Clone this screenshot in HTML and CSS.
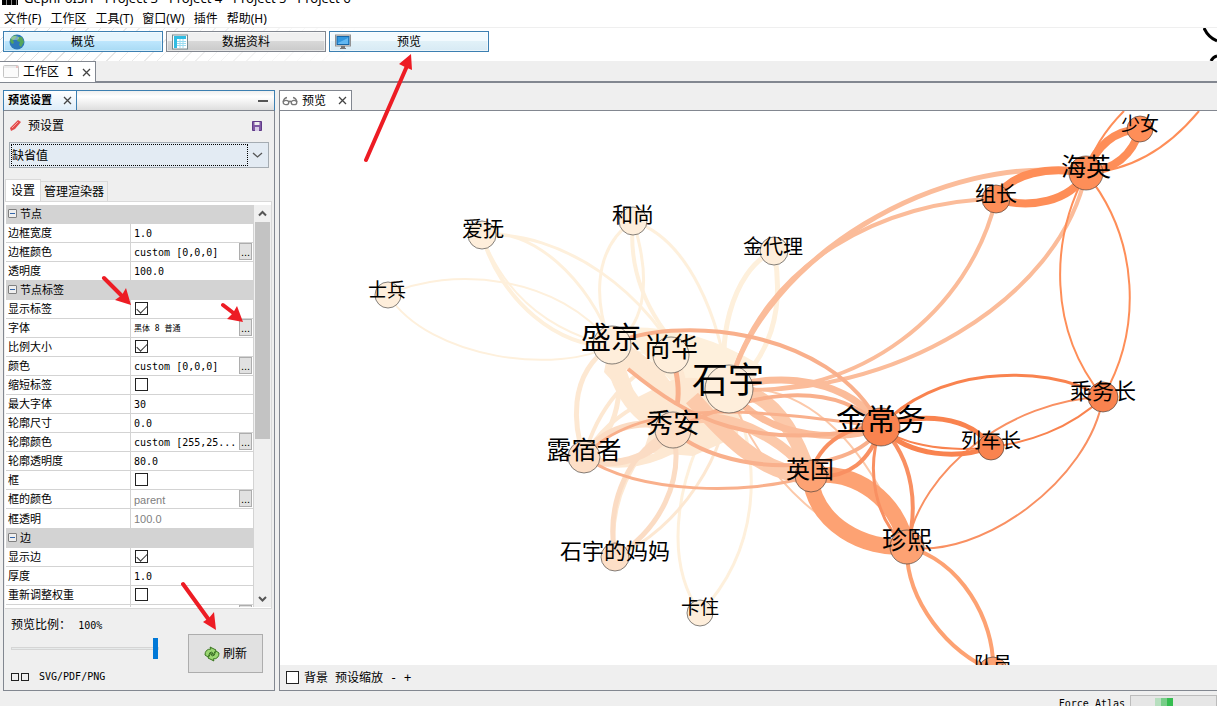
FILE: index.html
```html
<!DOCTYPE html>
<html lang="zh-CN">
<head>
<meta charset="utf-8">
<title>Gephi</title>
<link rel="stylesheet" href="styles.css">
</head>
<body>
<header class="titlebar"><span class="app-icon"></span><span class="title">GephPoISH - Project 3 - Project 4 - Project 5 - Project 6</span></header>
<nav class="menu">
  <button>文件(F)</button><button>工作区</button><button>工具(T)</button><button>窗口(W)</button><button>插件</button><button>帮助(H)</button>
</nav>
<div class="perspectives">
  <button class="persp blue">
    <svg width="16" height="16" viewBox="0 0 16 16"><circle cx="8" cy="8" r="7.5" fill="#2d78b8"/><path d="M2 4Q5 0 8 2L6 5 4 6 5 9 3 10 1 7ZM9 3L13 3 15 8 12 13 10 11 11 8 8 7Z" fill="#55a65c"/><ellipse cx="6" cy="4" rx="4" ry="2" fill="#fff" opacity=".35"/></svg>
    <span>概览</span></button>
  <button class="persp gray">
    <svg width="16" height="16" viewBox="0 0 16 16"><rect x=".5" y="1" width="15" height="14" fill="#fff" stroke="#778a8e"/><path d="M2 2h12v3H2zM2 5h3v9H2z" fill="#31bce2"/><path d="M5 7.500h9M5 9.500h9M5 11.500h9M8 5v9M11 5v9" stroke="#9bdcf0"/></svg>
    <span>数据资料</span></button>
  <button class="persp pale">
    <svg width="16" height="16" viewBox="0 0 16 16"><rect x=".5" y="1" width="15" height="11" fill="#ddd" stroke="#929292"/><rect x="2" y="2.500" width="12" height="8" fill="#3197df" stroke="#1766a6"/><path d="M3 9L13 4V10H3Z" fill="#62b8f2"/><path d="M6 12h4v2h1v1H5v-1h1z" fill="#777"/></svg>
    <span>预览</span></button>
  <svg class="swirl" width="14" height="33" viewBox="0 0 14 33"><path d="M1 0Q5 9 14 13M8 33Q10 29 14 28" fill="none" stroke="#000" stroke-width="3"/></svg>
</div>
<div class="workspaces">
  <div class="workspace-tab">
    <svg width="16" height="14" viewBox="0 0 16 14"><rect x=".5" y=".5" width="15" height="12" rx="1" fill="#fbfbfb" stroke="#c5c5c5"/><path d="M1 2h12" stroke="#ddd"/><path d="M13 2h2" stroke="#d88"/></svg>
    <span>工作区 1</span>
    <button class="close" aria-label="关闭工作区"><svg width="9" height="9" viewBox="0 0 9 9"><path d="M1 1L8 8M8 1L1 8"/></svg></button>
  </div>
</div>
<main class="main">
  <section class="settings">
    <div class="panel-head">
      <div class="panel-tab active"><b>预览设置</b><button class="close" aria-label="关闭"><svg width="9" height="9" viewBox="0 0 9 9"><path d="M1 1L8 8M8 1L1 8"/></svg></button></div>
      <button class="minimize" aria-label="最小化"></button>
    </div>
    <div class="preset-row">
      <svg width="12" height="12" viewBox="0 0 12 12"><path d="M0 8L8 0 11 2 5 9 1 11Z" fill="#e24b4b"/><path d="M2 8L8 2" stroke="#f7a3a0"/></svg>
      <label for="preset">预设置</label>
      <button class="save" aria-label="保存"><svg width="10" height="10" viewBox="0 0 10 10"><path d="M.5.5h9v9h-9z" fill="#8059a4" stroke="#5f3b88"/><path d="M2.500 1h5v3h-5z" fill="#eee"/><path d="M3 6h4v4H3z" fill="#d8cce8"/></svg></button>
    </div>
    <div class="combo">
      <select id="preset"><option>缺省值</option></select>
      <svg width="19" height="22" viewBox="0 0 19 22"><path d="M5 9L9.500 13 14 9" fill="none" stroke="#555" stroke-width="1.300"/></svg>
    </div>
    <div class="tabs"><button class="on">设置</button><button>管理渲染器</button></div>
    <div class="props">
      <div class="props-view">
      <table>
        <tr class="group"><th colspan="2"><i></i>节点</th></tr>
        <tr><td>边框宽度</td><td>1.0</td></tr>
        <tr><td>边框颜色</td><td><span class="cell"><span>custom [0,0,0]</span><button>...</button></span></td></tr>
        <tr><td>透明度</td><td>100.0</td></tr>
        <tr class="group"><th colspan="2"><i></i>节点标签</th></tr>
        <tr><td><label for="c1">显示标签</label></td><td><input id="c1" type="checkbox" checked></td></tr>
        <tr><td>字体</td><td><span class="cell"><small>黑体 8 普通</small><button>...</button></span></td></tr>
        <tr><td><label for="c2">比例大小</label></td><td><input id="c2" type="checkbox" checked></td></tr>
        <tr><td>颜色</td><td><span class="cell"><span>custom [0,0,0]</span><button>...</button></span></td></tr>
        <tr><td><label for="c3">缩短标签</label></td><td><input id="c3" type="checkbox"></td></tr>
        <tr><td>最大字体</td><td>30</td></tr>
        <tr><td>轮廓尺寸</td><td>0.0</td></tr>
        <tr><td>轮廓颜色</td><td><span class="cell"><span>custom [255,25...</span><button>...</button></span></td></tr>
        <tr><td>轮廓透明度</td><td>80.0</td></tr>
        <tr><td><label for="c4">框</label></td><td><input id="c4" type="checkbox"></td></tr>
        <tr><td>框的颜色</td><td><span class="cell"><span class="off">parent</span><button>...</button></span></td></tr>
        <tr><td>框透明</td><td><span class="off">100.0</span></td></tr>
        <tr class="group"><th colspan="2"><i></i>边</th></tr>
        <tr><td><label for="c5">显示边</label></td><td><input id="c5" type="checkbox" checked></td></tr>
        <tr><td>厚度</td><td>1.0</td></tr>
        <tr><td><label for="c6">重新调整权重</label></td><td><input id="c6" type="checkbox"></td></tr>
        <tr><td></td><td><span class="cell"><span></span><button aria-label="选择"></button></span></td></tr>
      </table>
      </div>
      <div class="scroll">
        <svg width="17" height="17" viewBox="0 0 17 17"><path d="M5 10.500L8.500 7 12 10.500"/></svg>
        <div class="thumb"></div>
        <svg class="down" width="17" height="17" viewBox="0 0 17 17"><path d="M5 7L8.500 10.500 12 7"/></svg>
      </div>
    </div>
    <div class="footer">
      <div class="ratio">
        <label for="ratio">预览比例： <span>100%</span></label>
        <input id="ratio" type="range" min="0" max="100" value="100">
        <div class="export"><i></i><i></i><span>SVG/PDF/PNG</span></div>
      </div>
      <button class="refresh"><svg width="16" height="16" viewBox="0 0 16 16"><g fill="#9bd672" stroke="#39761e" stroke-linejoin="round"><path d="M1 9Q1 3 7 3L6 1 12 4 9 9 8 6Q5 6 5 9L4 11Z"/><path d="M15 7Q15 13 9 13L10 15 4 12 7 7 8 10Q11 10 11 7L12 5Z"/></g></svg><span>刷新</span></button>
    </div>
  </section>
  <section class="preview">
    <div class="panel-head">
      <div class="panel-tab"><svg width="16" height="10" viewBox="0 0 16 10"><g fill="none" stroke="#777" stroke-width="1.300"><ellipse cx="4" cy="6.500" rx="2.800" ry="2.200"/><ellipse cx="12" cy="6.500" rx="2.800" ry="2.200"/><path d="M6.500 6Q8 4.500 9.500 6M1 6Q2 2 5 1.500M15 6Q14 2 11 1.500"/></g></svg><span>预览</span><button class="close" aria-label="关闭预览"><svg width="9" height="9" viewBox="0 0 9 9"><path d="M1 1L8 8M8 1L1 8"/></svg></button></div>
    </div>
    <div class="canvas">
      <svg class="graph" viewBox="280 111 937 554" preserveAspectRatio="xMinYMin slice">
        <g class="edges">
          <path fill="#fef0dc" d="M612 328Q690 322 760 365L740 420 690 400 640 350Z"/>
          <g stroke="#fef0dc">
            <path stroke-width="2" d="M388 295C450 265 560 275 612 345M388 295C430 360 560 375 612 345"/>
            <path stroke-width="3" d="M482 235C530 225 590 280 612 345M482 235C560 230 650 290 690 380"/>
            <path stroke-width="4" d="M482 235C500 300 560 350 612 345"/>
            <path stroke-width="2" d="M482 235C510 310 570 345 660 355"/>
            <path stroke-width="3" d="M633 221C590 250 595 310 612 345M633 221C655 290 640 330 612 345"/>
            <path stroke-width="4" d="M633 221C625 300 680 360 729 389"/>
            <path stroke-width="3" d="M633 221C690 240 720 320 729 389"/>
            <path stroke-width="5" d="M774 251C730 270 715 350 729 389M774 251C785 310 770 360 729 389"/>
            <path stroke-width="3" d="M700 613C663 560 673 470 729 389M700 613C760 550 764 460 729 389"/>
          </g>
          <path fill="#fde8d2" d="M612 330Q640 350 660 385 700 365 740 400L738 436 693 456 643 452 652 425 604 372Z"/>
          <path fill="#fff" d="M626 369L652 390 636 398Z"/>
          <g stroke="#fde8d2">
            <path stroke-width="16" d="M612 345C615 390 640 420 673 430M612 345C660 370 680 400 673 430"/>
            <path stroke-width="10" d="M671 355C685 380 688 410 673 430M671 355C650 380 655 410 673 430"/>
            <path stroke-width="5" d="M612 345C565 375 575 430 584 457M612 345C630 400 610 440 584 457"/>
            <path stroke-width="8" d="M584 457C640 480 710 440 729 389"/>
            <path stroke-width="4" d="M584 457C610 410 670 380 729 389M584 457C600 400 635 370 671 355"/>
            <path stroke-width="3" d="M615 557C680 530 730 450 729 389M615 557C605 480 660 415 729 389"/>
          </g>
          <g stroke="#fbdcc4">
            <path stroke-width="5" d="M615 557C605 500 630 450 673 430M615 557C660 530 685 480 673 430"/>
            <path stroke-width="7" d="M584 457C610 470 650 460 673 430M584 457C600 430 640 415 673 430"/>
          </g>
          <g stroke="#fcc9aa">
            <path stroke-width="14" d="M729 389C770 390 795 430 810 476"/>
            <path stroke-width="16" d="M692 398C720 430 760 475 810 476"/>
            <path stroke-width="10" d="M673 430C700 400 780 430 810 476"/>
            <path stroke-width="2" d="M729 389C760 480 840 550 907 547M729 389C810 380 870 450 907 547"/>
          </g>
          <g stroke="#fbbc9a">
            <path stroke-width="5" d="M729 389C760 260 940 150 1086 173"/>
            <path stroke-width="4" d="M729 389C760 260 890 200 996 199M729 389C860 400 970 310 996 199M729 389C890 400 1060 300 1086 173"/>
            <path stroke-width="7" d="M729 389C780 370 850 380 881 427M729 389C770 445 850 440 881 427"/>
          </g>
          <g stroke="#f9b08c">
            <path stroke-width="4" d="M612 345C670 315 830 325 881 427M628 369C690 420 750 452 881 427M673 430C740 395 830 375 881 427M673 430C720 475 850 480 881 427"/>
            <path stroke-width="3" d="M584 457C640 395 760 410 881 427M584 457C640 495 750 495 810 476"/>
            <path stroke-width="5" d="M673 357C677 375 680 390 677 405"/>
          </g>
          <g stroke="#fda273">
            <path stroke-width="16" d="M810 476C855 468 898 500 907 547M810 476C815 525 865 550 907 547"/>
            <path stroke-width="4" d="M907 547C905 600 950 655 993 670M907 547C960 560 995 620 993 670"/>
          </g>
          <g stroke="#f99062">
            <path stroke-width="2" d="M907 547C920 470 1010 400 1103 397M907 547C980 560 1090 480 1103 397"/>
            <path stroke-width="3" d="M881 427C865 470 875 520 907 547"/>
            <path stroke-width="4" d="M881 427C915 460 918 510 907 547M810 476C820 440 850 425 881 427M810 476C850 480 870 460 881 427"/>
          </g>
          <g stroke="#f9834f">
            <path stroke-width="3" d="M881 427C930 370 1040 360 1103 397"/>
            <path stroke-width="2" d="M881 427C920 460 1040 460 1103 397"/>
            <path stroke-width="5" d="M881 427C920 412 970 415 991 447M881 427C910 458 960 459 991 447"/>
          </g>
          <g stroke="#fe8e58">
            <path stroke-width="2" d="M1086 173C1050 240 1048 330 1103 397M1086 173C1140 240 1142 330 1103 397M1086 173Q1095 140 1124 111M1086 173Q1150 170 1199 111"/>
            <path stroke-width="8" d="M1086 173Q1102 131 1140 129M1140 129Q1129 168 1086 173M996 199C1010 172 1050 166 1086 173M996 199C1030 209 1070 202 1086 173"/>
          </g>
        </g>
        <g class="nodes">
          <g fill="#feeedb"><circle cx="612" cy="345" r="19"/><circle cx="671" cy="355" r="18"/><circle cx="729" cy="389" r="24"/><circle cx="482" cy="235" r="14"/><circle cx="633" cy="221" r="14"/><circle cx="774" cy="251" r="14"/><circle cx="388" cy="295" r="13"/><circle cx="700" cy="613" r="13"/></g>
          <g fill="#fddfc7"><circle cx="673" cy="430" r="18"/><circle cx="584" cy="457" r="16"/><circle cx="615" cy="557" r="14"/></g>
          <g fill="#fda273"><circle cx="811" cy="476" r="16"/><circle cx="907" cy="547" r="17"/><circle cx="993" cy="672" r="15"/></g>
          <g fill="#f9834f"><circle cx="881" cy="427" r="19"/><circle cx="991" cy="447" r="13"/><circle cx="1103" cy="397" r="15"/></g>
          <g fill="#fe8e58"><circle cx="1086" cy="173" r="17"/><circle cx="996" cy="199" r="14"/><circle cx="1140" cy="129" r="13"/></g>
        </g>
        <g class="labels">
          <text x="611" y="348" font-size="30">盛京</text>
          <text x="671" y="357" font-size="27">尚华</text>
          <text x="728" y="393" font-size="36">石宇</text>
          <text x="673" y="433" font-size="27">秀安</text>
          <text x="584" y="459" font-size="25">露宿者</text>
          <text x="881" y="430" font-size="30">金常务</text>
          <text x="810" y="478" font-size="24">英国</text>
          <text x="907" y="549" font-size="25">珍熙</text>
          <text x="1086" y="176" font-size="25">海英</text>
          <text x="996" y="201" font-size="21">组长</text>
          <text x="1140" y="131" font-size="19">少女</text>
          <text x="991" y="448" font-size="20">列车长</text>
          <text x="1103" y="399" font-size="22">乘务长</text>
          <text x="483" y="236" font-size="21">爱抚</text>
          <text x="633" y="222" font-size="21">和尚</text>
          <text x="773" y="254" font-size="20">金代理</text>
          <text x="387" y="297" font-size="19">士兵</text>
          <text x="615" y="559" font-size="22">石宇的妈妈</text>
          <text x="700" y="614" font-size="19">卡住</text>
          <text x="993" y="671" font-size="19">队员</text>
        </g>
      </svg>
    </div>
    <div class="preview-bar"><input id="bg" type="checkbox"><label for="bg">背景</label><span>预设缩放</span><button>-</button><button>+</button></div>
  </section>
</main>
<footer class="status"><span>Force Atlas</span><div class="progress"><i></i><i></i><i></i></div></footer>
<svg class="arrows" width="1217" height="706" viewBox="0 0 1217 706">
  <g stroke="#ed1c24" stroke-width="4" stroke-linecap="round"><path d="M366 160L407 66M104 278L122 296M223 305L236 315M183 584L209 620"/></g>
  <g fill="#ed1c24"><path d="M411 54L412 70 405 67 399 64ZM131 305L115 300 122 295 126 288ZM243 322L227 319 233 313 237 306ZM216 630L203 622 209 618 214 612Z"/></g>
</svg>
</body>
</html>
```
FILE: styles.css
```css
* { box-sizing: border-box; }
body { margin: 0; height: 100vh; display: flex; flex-direction: column; overflow: hidden; background: #efefef; color: #000; font: 12px/18px "DejaVu Sans Mono", "Noto Sans CJK SC", monospace; }
button, input, select { font: inherit; color: inherit; margin: 0; padding: 0; border: 0; background: none; }
.titlebar { flex: none; height: 8px; display: flex; align-items: flex-end; gap: 6px; padding-left: 2px; overflow: hidden; background: #fff; font: 13px/18px "Noto Sans", sans-serif; }
.app-icon { width: 16px; height: 5px; margin-bottom: 3px; background: repeating-linear-gradient(90deg, #000 0 4px, #888 4px 5px); }
.title { height: 18px; margin-bottom: 1px; }
.menu { flex: none; height: 20px; display: flex; gap: 9px; padding: 1px 0 0 4px; background: #fff; border-bottom: 1px solid #efefef; font: 12px/20px "Noto Sans", "Noto Sans CJK SC", sans-serif; }
.perspectives { flex: none; height: 33px; display: flex; gap: 3px; padding: 3px 0 0 3px; background: linear-gradient(90deg, transparent, #fff 360px), repeating-linear-gradient(135deg, #fff 0 8px, #ddd 8px 9px); }
.persp { display: flex; align-items: center; width: 160px; height: 21px; padding: 0 5px; border: 1px solid #828790; box-shadow: inset 0 0 0 1px #fff8; }
.persp span { flex: 1; text-align: center; padding-right: 16px; }
.blue { border-color: #3c7fb1; background: linear-gradient(#e5f5fd 0 50%, #bde6fd 50%, #a8daf4); }
.gray { background: linear-gradient(#f0f0f0 0 50%, #d8d8d8 50%, #cacaca); }
.pale { border-color: #3c7fb1; background: linear-gradient(#f2fafe 0 50%, #e1f1f8 50%, #d7eaf4); }
.swirl { margin: -3px 0 0 auto; }
.workspaces { flex: none; height: 22px; display: flex; border-bottom: 2px solid #828790; }
.workspace-tab { display: flex; align-items: center; gap: 4px; height: 21px; width: 96px; padding: 0 4px 0 3px; background: #fff; border: 1px solid #828790; border-width: 1px 1px 0 0; }
.close { display: flex; margin-left: auto; }
.close path { stroke: #444; stroke-width: 1.300; }
.main { flex: 1; min-height: 0; display: flex; gap: 4px; padding: 7px 0 0 3px; }
.settings { flex: none; width: 272px; display: flex; flex-direction: column; border: 1px solid #828790; }
.panel-head { flex: none; display: flex; height: 21px; border-bottom: 1px solid #828790; }
.panel-tab { display: flex; align-items: center; gap: 4px; width: 72px; padding: 0 4px 0 2px; background: #fff; border: 1px solid #828790; border-width: 1px 1px 0 0; }
.settings .panel-head { margin: -1px; width: 272px; border: 1px solid #3c7fb1; border-bottom-color: #828790; background: linear-gradient(#efefef, #fff 30%, #dedede); justify-content: space-between; align-items: center; }
.settings .active { align-self: stretch; width: 73px; padding-left: 4px; border: 0; border-right: 1px solid #3c7fb1; background: linear-gradient(#fff, #deedf9); }
.active b { font-size: 11px; }
.minimize { width: 10px; height: 2px; margin-right: 6px; background: #555; }
.preset-row { flex: none; display: flex; align-items: center; gap: 6px; height: 32px; padding: 0 12px 0 6px; }
.save { display: flex; margin-left: auto; }
.combo { flex: none; display: flex; height: 26px; margin: 0 5px; padding: 1px; border: 1px solid #a5acb2; background: #e3ebf3; }
.combo select { flex: 1; appearance: none; height: 22px; padding-top: 2px; border: 1px dotted #000; }
.tabs { flex: none; display: flex; align-items: flex-end; height: 33px; padding-left: 1px; }
.tabs button { height: 20px; padding: 0 3px; border: 1px solid #d9d9d9; border-width: 1px 1px 0 0; white-space: nowrap; }
.tabs .on { height: 22px; padding: 0 5px; background: #fff; border-left-width: 1px; }
.props { flex: 1; min-height: 0; display: flex; margin: 0 2px 0 1px; padding: 3px 0 1px 1px; background: #fff; border: 1px solid #d9d9d9; border-width: 1px 1px 1px 0; }
.props-view { flex: 1; overflow: hidden; }
table { width: 100%; table-layout: fixed; border-collapse: separate; border-spacing: 0; font-size: 11px; }
td, th { height: 19px; padding: 2px 2px 0; line-height: 16px; white-space: nowrap; text-align: left; font-weight: 400; border-bottom: 1px solid #d3d3d3; }
td + td { width: 125px; padding: 2px 1px 0 3px; border-left: 1px solid #d3d3d3; border-right: 1px solid #d3d3d3; font-size: 10px; }
.group th { background: #d3d3d3; }
.group i { display: inline-block; width: 9px; height: 9px; margin-right: 3px; border: 1px solid #808080; border-radius: 1px; background: linear-gradient(#36a, #36a) center / 5px 1px no-repeat #eee; }
.cell { display: flex; justify-content: space-between; height: 16px; }
.cell button { width: 13px; height: 17px; margin-top: -2px; border: 1px solid #adadad; background: #e1e1e1; font: 11px/14px "Liberation Sans", sans-serif; }
.cell small { font-size: 8px; }
.off { color: #808080; font: 11px/16px "Liberation Sans", sans-serif; }
input[type="checkbox"] { appearance: none; display: block; flex: none; width: 13px; height: 13px; margin-left: 1px; border: 1px solid #222; background: #fff; }
td input[type="checkbox"] { margin-top: -4px; }
input[type="checkbox"]:checked::after { content: ""; display: block; width: 9px; height: 5px; margin: 2px 0 0 1px; border: solid #333; border-width: 0 0 1px 1px; transform: rotate(-45deg); }
.scroll { flex: none; display: flex; flex-direction: column; width: 17px; background: #f0f0f0; }
.scroll path { fill: none; stroke: #555; stroke-width: 2; }
.scroll .thumb { height: 54%; margin: 0 1px; background: #c3c3c3; }
.scroll .down { margin-top: auto; }
.footer { flex: none; display: flex; justify-content: space-between; height: 81px; padding: 6px 11px 1px 7px; }
.ratio { display: flex; flex-direction: column; gap: 2px; width: 148px; }
.ratio label { line-height: 20px; white-space: pre; }
.ratio span { font-size: 10px; }
input[type="range"] { appearance: none; width: 148px; height: 21px; }
input[type="range"]::-webkit-slider-runnable-track { height: 3px; border: 1px solid #d5d5d5; background: #e7eaea; }
input[type="range"]::-webkit-slider-thumb { appearance: none; width: 5px; height: 21px; margin-top: -10px; background: #0078d7; }
.export { display: flex; align-items: center; gap: 2px; margin-top: auto; height: 24px; }
.export i { width: 8px; height: 8px; border: 1px solid #222; }
.export span { margin-left: 8px; }
.refresh { display: flex; align-items: center; justify-content: center; gap: 3px; width: 75px; height: 39px; margin-top: 19px; border: 1px solid #adadad; background: #e1e1e1; }
.preview { flex: 1; min-width: 0; display: flex; flex-direction: column; border-left: 1px solid #828790; border-bottom: 1px solid #828790; }
.canvas { flex: 1; min-height: 0; background: #fff; }
.graph { display: block; width: 100%; height: 100%; }
.edges g path { fill: none; }
.nodes { stroke: #333; stroke-width: 1; stroke-opacity: .6; }
.labels { font-family: "Noto Sans CJK SC", sans-serif; text-anchor: middle; }
.preview-bar { flex: none; display: flex; align-items: center; gap: 7px; height: 25px; padding-left: 5px; }
.preview-bar button { width: 7px; }
.preview-bar label { margin-left: -2px; }
.status { flex: none; display: flex; justify-content: flex-end; gap: 5px; height: 15px; padding-top: 4px; overflow: hidden; font-size: 10px; line-height: 17px; }
.progress { display: flex; width: 87px; height: 18px; padding: 2px 0 0 24px; border: 1px solid #bcbcbc; background: #e6e6e6; }
.progress i { width: 6px; background: #b7dfbf; }
.progress i + i { background: #77cd88; }
.progress i + i + i { background: #35bd50; }
.arrows { position: absolute; left: 0; top: 0; pointer-events: none; }
```
